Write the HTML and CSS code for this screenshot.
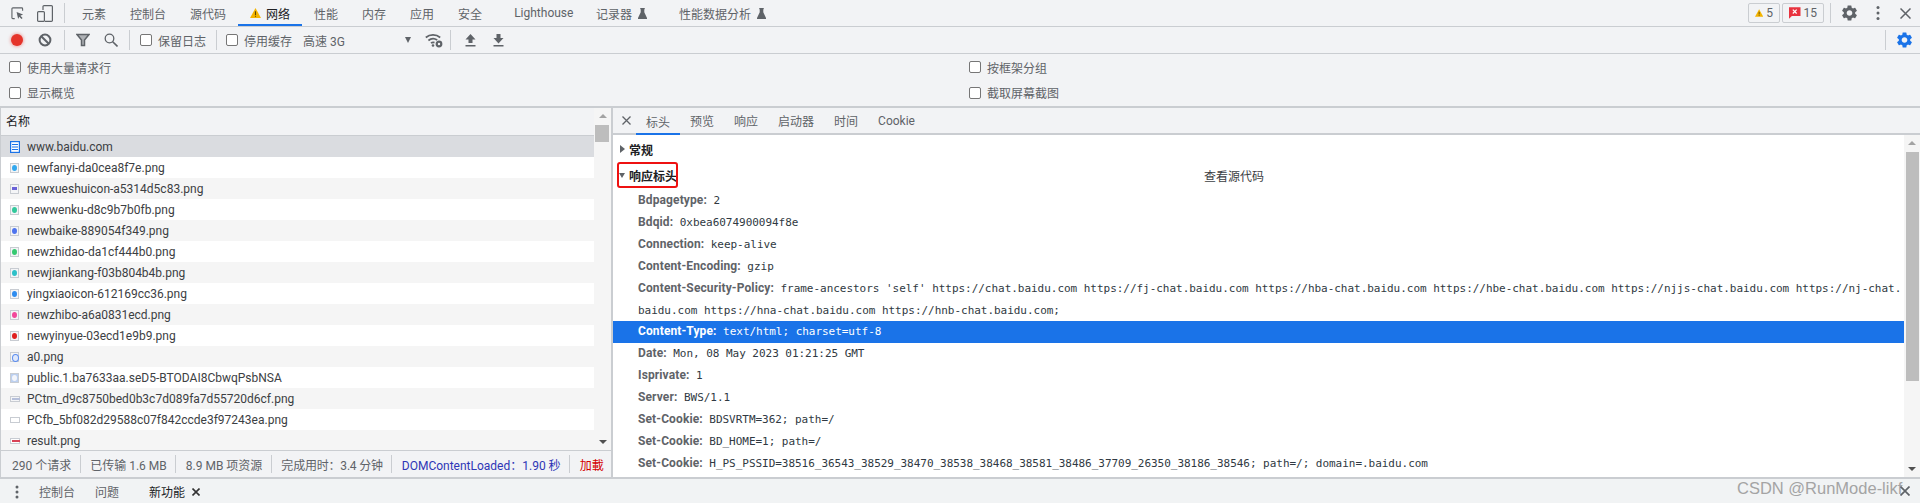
FILE: index.html
```html
<!DOCTYPE html>
<html lang="zh-CN">
<head>
<meta charset="utf-8">
<title>DevTools</title>
<link rel="stylesheet" href="styles.css">
</head>
<body>
<svg class="defs" width="0" height="0" aria-hidden="true">
  <symbol id="gear" viewBox="2.5 2 19 20"><path fill="currentColor" fill-rule="evenodd" d="M19.14 12.94c.04-.3.06-.61.06-.94 0-.32-.02-.64-.07-.94l2.03-1.58a.49.49 0 0 0 .12-.61l-1.92-3.32a.488.488 0 0 0-.59-.22l-2.39.96c-.5-.38-1.03-.7-1.62-.94l-.36-2.54a.484.484 0 0 0-.48-.41h-3.84c-.24 0-.43.17-.47.41l-.36 2.54c-.59.24-1.13.57-1.62.94l-2.39-.96c-.22-.08-.47 0-.59.22L2.74 8.87c-.12.21-.08.47.12.61l2.03 1.58c-.05.3-.09.63-.09.94s.02.64.07.94l-2.03 1.58a.49.49 0 0 0-.12.61l1.92 3.32c.12.22.37.29.59.22l2.39-.96c.5.38 1.03.7 1.62.94l.36 2.54c.05.24.24.41.48.41h3.84c.24 0 .44-.17.47-.41l.36-2.54c.59-.24 1.13-.56 1.62-.94l2.39.96c.22.08.47 0 .59-.22l1.92-3.32c.12-.22.07-.47-.12-.61l-2.01-1.58zM12 15.6c-1.98 0-3.6-1.62-3.6-3.6s1.62-3.6 3.6-3.6 3.6 1.62 3.6 3.6-1.62 3.6-3.6 3.6z"/></symbol>
  <symbol id="flask" viewBox="0 0 10 12"><path fill="currentColor" d="M2.5 0h5v1.2H7v3.3L10 11v1H0v-1l3-6.5V1.2h-.5z"/></symbol>
  <symbol id="warn" viewBox="0 0 12 11"><path fill="#f4b400" d="M6 0l6 11H0z"/><path fill="#5a4500" d="M5.4 3.6h1.2v4H5.400zM5.400 8.400h1.200v1.200H5.400z"/></symbol>
</svg>
<div class="app">
  <header class="bar tabs-main">
    <svg class="ic ic-inspect" width="13" height="13" viewBox="0 0 14 14"><path fill="none" stroke="#5f6368" stroke-width="1.200" d="M4 12.500H2a1 1 0 0 1-1-1V2a1 1 0 0 1 1-1h9.500a1 1 0 0 1 1 1v2"/><path fill="#5f6368" d="M6 5.500l7 2.600-2.900 1.200 2.400 2.500-1.200 1.200-2.400-2.500L7.700 13z"/></svg>
    <svg class="ic ic-device" width="16" height="17" viewBox="0 0 16 17"><path fill="none" stroke="#5f6368" stroke-width="1.200" d="M6 5V1.600A1 1 0 0 1 7 .6h7.400a1 1 0 0 1 1 1v13.800a1 1 0 0 1-1 1H8"/><rect x=".6" y="6.600" width="6.800" height="9.800" rx="1" fill="none" stroke="#5f6368" stroke-width="1.200"/></svg>
    <span class="sep sep-main"></span>
    <a class="tab tab-first">元素</a>
    <a class="tab">控制台</a>
    <a class="tab">源代码</a>
    <a class="tab tab-on"><svg class="warn-ic" width="11" height="10"><use href="#warn"/></svg>网络</a>
    <a class="tab">性能</a>
    <a class="tab">内存</a>
    <a class="tab">应用</a>
    <a class="tab">安全</a>
    <a class="tab tab-gap">Lighthouse</a>
    <a class="tab">记录器<svg class="flask" width="9" height="11"><use href="#flask"/></svg></a>
    <a class="tab tab-gap2">性能数据分析<svg class="flask" width="9" height="11"><use href="#flask"/></svg></a>
    <span class="grow"></span>
    <span class="badge badge-warn"><svg width="11" height="10"><use href="#warn"/></svg>5</span>
    <span class="badge badge-err"><svg width="12" height="12" viewBox="0 0 12 12"><path fill="#e8333f" d="M0 0h12v9H3l-3 3z"/><path stroke="#fff" stroke-width="1.300" d="M4 2.500l4 4M8 2.500l-4 4"/></svg>15</span>
    <span class="sep sep-right"></span>
    <svg class="gear-grey" width="15" height="16"><use href="#gear"/></svg>
    <svg class="dots" width="4" height="16" viewBox="0 0 4 16"><circle cx="2" cy="2.500" r="1.500"/><circle cx="2" cy="8" r="1.500"/><circle cx="2" cy="13.500" r="1.500"/></svg>
    <svg class="close-main" width="11" height="11" viewBox="0 0 11 11"><path stroke="#5f6368" stroke-width="1.500" d="M.5.500l10 10M10.500.500l-10 10"/></svg>
  </header>

  <div class="bar toolbar">
    <span class="rec"></span>
    <svg class="ic-block" width="14" height="14" viewBox="0 0 14 14"><circle cx="7" cy="7" r="5.400" fill="none" stroke="#5f6368" stroke-width="2"/><path stroke="#5f6368" stroke-width="2" d="M3.200 3.200l7.600 7.600"/></svg>
    <span class="sep sep-a"></span>
    <svg class="ic-filter" width="14" height="14" viewBox="0 0 14 14"><path fill="#aeb1b5" stroke="#5f6368" stroke-width="1.500" d="M1 1.500h12L8.500 7v5.500h-3V7z"/></svg>
    <svg class="ic-search" width="14" height="14" viewBox="0 0 14 14"><circle cx="5.500" cy="5.500" r="4.300" fill="none" stroke="#5f6368" stroke-width="1.300"/><path stroke="#5f6368" stroke-width="1.600" d="M8.700 8.700l4.800 4.800"/></svg>
    <span class="sep sep-b"></span>
    <label class="chk chk-log"><span class="box"></span>保留日志</label>
    <span class="sep sep-c"></span>
    <label class="chk chk-cache"><span class="box"></span>停用缓存</label>
    <span class="throttle">高速 3G</span>
    <span class="tri-down"></span>
    <svg class="ic-wifi" width="18" height="15" viewBox="0 0 18 15"><path fill="none" stroke="#5f6368" stroke-width="1.700" d="M.800 4.500a11 11 0 0 1 14.400 0M3.400 7.500a7.200 7.200 0 0 1 8.800-.5M6 10.200a3.500 3.500 0 0 1 3.500-.6"/><circle cx="8" cy="12.500" r="1.300" fill="#5f6368"/><circle cx="14" cy="11" r="2.300" fill="none" stroke="#5f6368" stroke-width="2.200"/></svg>
    <span class="sep sep-d"></span>
    <svg class="ic-up" width="11" height="14" viewBox="0 0 11 14"><path fill="#5f6368" d="M5.500 1l5 5.500H7.500V10h-4V6.500H.5zM.5 12h10v1.400H.5z"/></svg>
    <svg class="ic-down" width="11" height="14" viewBox="0 0 11 14"><path fill="#5f6368" d="M3.500 1h4v4h3l-5 5.500L.5 5h3zM.5 12h10v1.400H.5z"/></svg>
    <span class="grow"></span>
    <span class="sep sep-e"></span>
    <svg class="gear-blue" width="15" height="16"><use href="#gear"/></svg>
  </div>

  <div class="settings">
    <div class="set-col set-left">
      <label class="chk"><span class="box"></span>使用大量请求行</label>
      <label class="chk"><span class="box"></span>显示概览</label>
    </div>
    <div class="set-col">
      <label class="chk"><span class="box"></span>按框架分组</label>
      <label class="chk"><span class="box"></span>截取屏幕截图</label>
    </div>
  </div>

  <main class="split">
    <section class="left">
      <div class="list-wrap">
        <div class="list">
          <div class="list-head">名称</div>
          <div class="row row-sel"><svg class="doc" width="10" height="12" viewBox="0 0 10 12"><rect x=".6" y=".6" width="8.800" height="10.800" fill="#fff" stroke="#1a73e8" stroke-width="1.200"/><path stroke="#1a73e8" d="M2 3.500h6M2 6h6M2 8.500h6"/></svg>www.baidu.com</div>
          <div class="row"><span class="thumb t-cloud"></span>newfanyi-da0cea8f7e.png</div>
          <div class="row row-alt"><span class="thumb t-xue"></span>newxueshuicon-a5314d5c83.png</div>
          <div class="row"><span class="thumb t-wen"></span>newwenku-d8c9b7b0fb.png</div>
          <div class="row row-alt"><span class="thumb t-bai"></span>newbaike-889054f349.png</div>
          <div class="row"><span class="thumb t-zhi"></span>newzhidao-da1cf444b0.png</div>
          <div class="row row-alt"><span class="thumb t-jian"></span>newjiankang-f03b804b4b.png</div>
          <div class="row"><span class="thumb t-ying"></span>yingxiaoicon-612169cc36.png</div>
          <div class="row row-alt"><span class="thumb t-bo"></span>newzhibo-a6a0831ecd.png</div>
          <div class="row"><span class="thumb t-yin"></span>newyinyue-03ecd1e9b9.png</div>
          <div class="row row-alt"><span class="thumb t-a0"></span>a0.png</div>
          <div class="row"><span class="thumb t-pub"></span>public.1.ba7633aa.seD5-BTODAI8CbwqPsbNSA</div>
          <div class="row row-alt"><span class="thumb-wide t-pc1"></span>PCtm_d9c8750bed0b3c7d089fa7d55720d6cf.png</div>
          <div class="row"><span class="thumb-wide t-pc2"></span>PCfb_5bf082d29588c07f842ccde3f97243ea.png</div>
          <div class="row row-alt"><span class="thumb-wide t-res"></span>result.png</div>
        </div>
        <div class="vscroll vscroll-left">
          <span class="arr-up"></span>
          <span class="thumb-bar thumb-bar-left"></span>
          <span class="grow"></span>
          <span class="arr-down"></span>
        </div>
      </div>
      <footer class="status">
        <span class="st">290 个请求</span>
        <span class="st">已传输 1.6 MB</span>
        <span class="st">8.9 MB 项资源</span>
        <span class="st st-time">完成用时：3.4 分钟</span>
        <span class="st st-blue">DOMContentLoaded：1.90 秒</span>
        <span class="st st-red">加載</span>
      </footer>
    </section>

    <section class="right">
      <nav class="tabs-sub">
        <svg class="close-sub" width="9" height="9" viewBox="0 0 9 9"><path stroke="#5f6368" stroke-width="1.300" d="M.5.500l8 8M8.500.500l-8 8"/></svg>
        <a class="sub sub-on">标头</a>
        <a class="sub">预览</a>
        <a class="sub">响应</a>
        <a class="sub">启动器</a>
        <a class="sub">时间</a>
        <a class="sub">Cookie</a>
      </nav>
      <div class="detail-wrap">
        <div class="detail">
          <div class="sec"><span class="tri-right"></span><b>常规</b></div>
          <div class="sec sec-open">
            <span class="tri-open"></span><b class="sec-title">响应标头</b>
            <span class="view-src">查看源代码</span>
            <span class="callout"></span>
          </div>
          <div class="h"><b>Bdpagetype:</b><code>2</code></div>
          <div class="h"><b>Bdqid:</b><code>0xbea6074900094f8e</code></div>
          <div class="h"><b>Connection:</b><code>keep-alive</code></div>
          <div class="h"><b>Content-Encoding:</b><code>gzip</code></div>
          <div class="h h-wrap"><b>Content-Security-Policy:</b><code>frame-ancestors 'self' https://chat.baidu.com https://fj-chat.baidu.com https://hba-chat.baidu.com https://hbe-chat.baidu.com https://njjs-chat.baidu.com https://nj-chat.<br>baidu.com https://hna-chat.baidu.com https://hnb-chat.baidu.com;</code></div>
          <div class="h h-sel"><b>Content-Type:</b><code>text/html; charset=utf-8</code></div>
          <div class="h"><b>Date:</b><code>Mon, 08 May 2023 01:21:25 GMT</code></div>
          <div class="h"><b>Isprivate:</b><code>1</code></div>
          <div class="h"><b>Server:</b><code>BWS/1.1</code></div>
          <div class="h"><b>Set-Cookie:</b><code>BDSVRTM=362; path=/</code></div>
          <div class="h"><b>Set-Cookie:</b><code>BD_HOME=1; path=/</code></div>
          <div class="h"><b>Set-Cookie:</b><code>H_PS_PSSID=38516_36543_38529_38470_38538_38468_38581_38486_37709_26350_38186_38546; path=/; domain=.baidu.com</code></div>
        </div>
        <div class="vscroll vscroll-right">
          <span class="arr-up"></span>
          <span class="thumb-bar thumb-bar-right"></span>
          <span class="grow"></span>
          <span class="arr-down"></span>
        </div>
      </div>
    </section>
  </main>

  <footer class="drawer">
    <svg class="dots drawer-dots" width="4" height="14" viewBox="0 0 4 14"><circle cx="2" cy="2" r="1.500"/><circle cx="2" cy="7" r="1.500"/><circle cx="2" cy="12" r="1.500"/></svg>
    <a class="dtab">控制台</a>
    <a class="dtab">问题</a>
    <a class="dtab dtab-on">新功能</a>
    <svg class="drawer-x" width="8" height="8" viewBox="0 0 8 8"><path stroke="#333" stroke-width="1.600" d="M.5.500l7 7M7.500.500l-7 7"/></svg>
    <span class="watermark">CSDN @RunMode-likf</span>
    <svg class="drawer-close" width="10" height="10" viewBox="0 0 10 10"><path stroke="#5f6368" stroke-width="1.700" d="M.5.500l9 9M9.500.500l-9 9"/></svg>
  </footer>
</div>
</body>
</html>
```

FILE: styles.css
```css
* { box-sizing: border-box; }
html, body { margin: 0; padding: 0; height: 100%; overflow: hidden; }
body {
  font-family: Roboto, "Noto Sans CJK SC", sans-serif;
  font-size: 12px;
  color: #5f6368;
  background: #f1f3f4;
}
.defs { position: absolute; }
.app { display: flex; flex-direction: column; height: 503px; width: 1920px; }
.grow { flex: 1; }
.bar { display: flex; align-items: center; background: #f2f3f5; border-bottom: 1px solid #cacdd1; flex: none; }
.sep { width: 1px; height: 20px; background: #cacdd1; flex: none; }

/* main tabs */
.tabs-main { height: 27px; }
.ic-inspect { margin-left: 11px; }
.ic-device { margin-left: 13px; }
.sep-main { margin-left: 11px; }
.tab { display: flex; align-items: center; height: 26px; padding: 0 12px; white-space: nowrap; flex: none; }
.tab-first { margin-left: 5px; }
.tab-on { color: #202124; box-shadow: inset 0 -2px 0 #1a73e8; }
.warn-ic { margin-right: 5px; }
.tab-gap { margin-left: 8px; padding-right: 10.500px; }
.tab-gap2 { margin-left: 8px; }
.flask { margin-left: 6px; color: #5f6368; }
.badge { display: flex; align-items: center; gap: 3px; height: 20px; border: 1px solid #cacdd1; border-radius: 2px; padding: 0 6px; margin-top: -1px; }
.badge-warn { width: 32px; padding: 0 6px; }
.badge-err { width: 42px; margin-left: 2px; }
.sep-right { margin-left: 6px; }
.gear-grey { margin-left: 11px; color: #5f6368; }
.dots { fill: #5f6368; margin-left: 18.500px; }
.close-main { margin-left: 20.500px; margin-right: 9px; }

/* toolbar */
.toolbar { height: 27px; }
.rec { width: 12px; height: 12px; border-radius: 50%; background: #e5342a; margin-left: 11px; box-shadow: 0 0 3px 1px rgba(229, 52, 42, .35); flex: none; }
.ic-block { margin-left: 15px; }
.sep-a { margin-left: 12px; }
.ic-filter { margin-left: 11px; }
.ic-search { margin-left: 14px; }
.sep-b { margin-left: 11px; }
.chk { display: flex; align-items: center; gap: 6px; white-space: nowrap; }
.box { width: 12px; height: 12px; border: 1px solid #767676; border-radius: 2px; background: #fff; flex: none; }
.chk-log { margin-left: 10px; }
.sep-c { margin-left: 10px; }
.chk-cache { margin-left: 9px; }
.throttle { margin-left: 11px; color: #5f6368; white-space: nowrap; }
.tri-down { width: 0; height: 0; border-left: 3.5px solid transparent; border-right: 3.5px solid transparent; border-top: 6px solid #5f6368; margin-left: 60px; }
.ic-wifi { margin-left: 14px; }
.sep-d { margin-left: 7px; }
.ic-up { margin-left: 14px; }
.ic-down { margin-left: 17px; }
.sep-e { margin-right: 11px; }
.gear-blue { color: #1a73e8; margin-right: 8px; }

/* settings */
.settings { display: flex; height: 54px; flex: none; border-bottom: 2px solid #cacdd1; background: #f2f3f5; padding-top: .5px; }
.set-col { display: flex; flex-direction: column; }
.set-col .chk { height: 25.500px; }
.set-left { width: 969px; padding-left: 9px; }

/* split */
.split { display: flex; height: 371px; flex: none; border-bottom: 2px solid #cacdd1; }
.left { width: 613px; flex: none; display: flex; flex-direction: column; border-left: 1px solid #cacdd1; border-right: 2px solid #cacdd1; }
.list-wrap { display: flex; height: 342px; flex: none; }
.list { flex: 1; min-width: 0; background: #fff; }
.list-head { height: 28px; line-height: 28px; background: #f2f3f5; color: #202124; padding-left: 5px; border-bottom: 1px solid #cacdd1; }
.row { display: flex; align-items: center; height: 21px; background: #fff; padding-left: 9px; color: #3c4043; white-space: nowrap; }
.row-alt { background: #f5f5f5; }
.row-sel { background: #dadce0; }
.doc { margin-right: 7px; flex: none; }
.thumb, .thumb-wide { position: relative; width: 9px; height: 10px; margin-right: 8px; flex: none; border: 1px solid #c8ccd2; background: #f4f5f7; }
.thumb-wide { height: 6px; width: 10px; margin-right: 7px; }
.thumb::after, .thumb-wide::after { content: ""; position: absolute; left: 1px; top: 1px; width: 5px; height: 6px; border-radius: 50%; background: #888; }
.t-cloud::after { background: #33a8ee; }
.t-xue::after { background: #6a62d8; height: 3px; top: 2px; border-radius: 0; }
.t-wen::after { background: #32c89c; }
.t-bai::after { background: #4f74ee; }
.t-zhi::after { background: #36c971; }
.t-jian::after { background: #2cc0c8; }
.t-ying::after { background: #2d8cf0; }
.t-bo::after { background: #f2489a; }
.t-yin::after { background: #e02020; }
.t-a0::after { background: #dfe8fb; border: 1px solid #5b8def; }
.t-pub { background: #bcd0f0; }
.t-pub::after { background: #f4f6fb; }
.t-pc1::after { background: #b5bfd9; width: 8px; height: 2px; border-radius: 0; }
.t-pc2 { background: #fff; }
.t-pc2::after { display: none; }
.t-res { background: #ffffff; }
.t-res::after { background: #d84356; width: 8px; height: 2px; border-radius: 0; }

.status { height: 27px; flex: none; display: flex; align-items: center; background: #f2f3f5; border-top: 1px solid #cacdd1; padding-left: 11px; white-space: nowrap; }
.st { display: flex; align-items: center; height: 18px; padding-right: 8.500px; margin-right: 9.500px; border-right: 1px solid #cacdd1; }
.st:last-child { border: 0; margin: 0; padding: 0; }
.st-time { letter-spacing: -.2px; }
.st-blue { color: #2f36b6; }
.st-red { color: #d40000; }

/* scrollbars */
.vscroll { display: flex; flex-direction: column; align-items: center; background: #f5f5f5; flex: none; }
.vscroll-left { width: 17px; }
.vscroll-right { width: 16px; }
.arr-up, .arr-down { width: 0; height: 0; border-left: 4px solid transparent; border-right: 4px solid transparent; flex: none; }
.arr-up { border-bottom: 4px solid #a3a3a3; margin-top: 6px; margin-bottom: 7px; }
.arr-down { border-top: 4px solid #505050; margin-bottom: 6px; }
.thumb-bar { background: #bdbdbd; flex: none; }
.thumb-bar-left { width: 14px; height: 17px; margin-right: 2px; }
.thumb-bar-right { width: 13px; height: 229px; }

/* right panel */
.right { flex: 1; min-width: 0; display: flex; flex-direction: column; background: #fff; }
.tabs-sub { display: flex; align-items: center; height: 27px; flex: none; background: #f2f3f5; border-bottom: 2px solid #cacdd1; }
.close-sub { margin-left: 9px; margin-right: 5px; }
.sub { display: flex; align-items: center; height: 25px; padding: 0 10px; }
.sub-on { box-shadow: inset 0 -2px 0 #1a73e8; height: 27px; margin-bottom: -2px; }
.detail-wrap { flex: 1; display: flex; min-height: 0; }
.detail { flex: 1; min-width: 0; background: #fff; padding-top: 3px; overflow: hidden; }
.sec { position: relative; display: flex; align-items: center; height: 22px; padding-left: 7px; color: #202124; }
.sec b { font-weight: 700; margin-left: 4px; }
.sec-open { margin-top: 4px; margin-bottom: 4px; }
.tri-right { width: 0; height: 0; border-top: 4px solid transparent; border-bottom: 4px solid transparent; border-left: 5px solid #5f6368; }
.tri-open { width: 0; height: 0; border-left: 3.5px solid transparent; border-right: 3.5px solid transparent; border-top: 5px solid #5f6368; margin-left: -1px; }
.view-src { margin-left: 527px; color: #3c4043; }
.callout { position: absolute; left: 4px; top: -2px; width: 61px; height: 26px; border: 2px solid #ee1111; border-radius: 3px; pointer-events: none; }
.h { min-height: 21.900px; line-height: 21.900px; padding-left: 25px; color: #5f6368; white-space: nowrap; }
.h b { font-weight: 700; letter-spacing: .12px; margin-right: 6.500px; }
.h code { font-family: "DejaVu Sans Mono", monospace; font-size: 11px; letter-spacing: -.03px; color: #303942; }
.h-sel { background: #1a73e8; color: #fff; }
.h-sel code { color: #fff; }

/* drawer */
.drawer { position: relative; display: flex; align-items: center; height: 25px; flex: none; background: #f1f3f4; }
.drawer-dots { margin-left: 15px; }
.dtab { margin-left: 20px; white-space: nowrap; }
.dtab-on { color: #202124; margin-left: 30px; }
.drawer-x { margin-left: 7px; }
.watermark { position: absolute; left: 1737px; top: -2px; font-family: "Liberation Sans", sans-serif; font-size: 16.500px; color: #a4a4a4; white-space: nowrap; line-height: 22px; }
.drawer-close { position: absolute; left: 1900px; top: 7px; }
```
